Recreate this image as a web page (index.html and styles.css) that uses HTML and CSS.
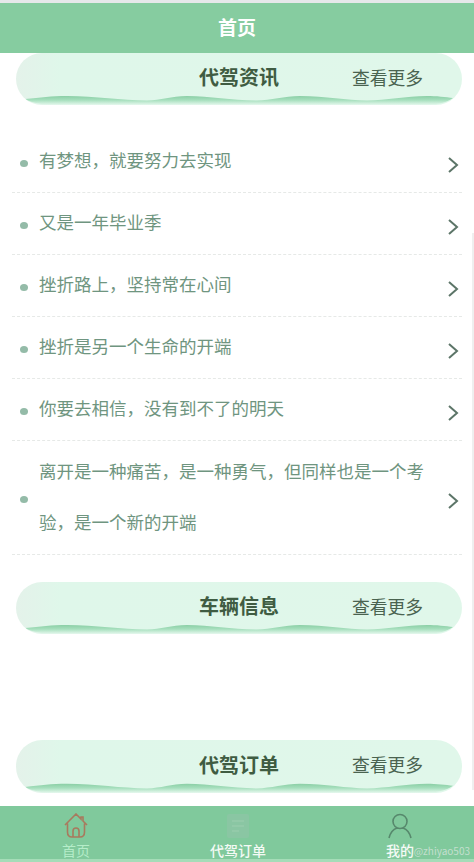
FILE: index.html
```html
<!DOCTYPE html>
<html lang="zh">
<head>
<meta charset="utf-8">
<title>首页</title>
<link rel="stylesheet" href="styles.css">
</head>
<body>
<svg class="defs" aria-hidden="true">
  <defs>
    <linearGradient id="waveFade" x1="0" y1="0" x2="0" y2="1">
      <stop offset="0" stop-color="#8bcfa6"/>
      <stop offset="0.45" stop-color="#a6dfbd"/>
      <stop offset="1" stop-color="#e6f8ee"/>
    </linearGradient>
    <symbol id="wave" viewBox="0 0 446 52" preserveAspectRatio="none">
      <path fill="url(#waveFade)" d="M9 46 C25 44.5 35 43 51 43 C80 43 105 47.5 131 47.5 C145 47.5 155 43 171 43 C195 43 215 47.5 241 47.5 C255 47.5 268 43 284 43 C310 43 330 47.5 351 47.5 C370 47.5 390 43 411 43 C420 43 430 44 437 45 C430 50 420 52 405 52 L40 52 C28 52 16 50 9 46 Z"/>
    </symbol>
  </defs>
</svg>
<div class="app">
  <header class="nav">首页</header>
  <main class="content">
    <span class="scroll-thumb"></span>
    <section class="card card-first">
      <span class="card-title">代驾资讯</span>
      <span class="card-more">查看更多</span>
      <svg class="wave"><use href="#wave"/></svg>
    </section>
    <ul class="news">
      <li class="news-item"><span class="dot"></span><span class="news-text">有梦想，就要努力去实现</span><svg class="chev" viewBox="0 0 12 18"><path d="M2 2 L10 9 L2 16"/></svg></li>
      <li class="news-item"><span class="dot"></span><span class="news-text">又是一年毕业季</span><svg class="chev" viewBox="0 0 12 18"><path d="M2 2 L10 9 L2 16"/></svg></li>
      <li class="news-item"><span class="dot"></span><span class="news-text">挫折路上，坚持常在心间</span><svg class="chev" viewBox="0 0 12 18"><path d="M2 2 L10 9 L2 16"/></svg></li>
      <li class="news-item"><span class="dot"></span><span class="news-text">挫折是另一个生命的开端</span><svg class="chev" viewBox="0 0 12 18"><path d="M2 2 L10 9 L2 16"/></svg></li>
      <li class="news-item"><span class="dot"></span><span class="news-text">你要去相信，没有到不了的明天</span><svg class="chev" viewBox="0 0 12 18"><path d="M2 2 L10 9 L2 16"/></svg></li>
      <li class="news-item news-item-long"><span class="dot"></span><span class="news-text">离开是一种痛苦，是一种勇气，但同样也是一个考验，是一个新的开端</span><svg class="chev" viewBox="0 0 12 18"><path d="M2 2 L10 9 L2 16"/></svg></li>
    </ul>
    <section class="card card-second">
      <span class="card-title">车辆信息</span>
      <span class="card-more">查看更多</span>
      <svg class="wave"><use href="#wave"/></svg>
    </section>
    <section class="card card-third">
      <span class="card-title">代驾订单</span>
      <span class="card-more">查看更多</span>
      <svg class="wave"><use href="#wave"/></svg>
    </section>
  </main>
  <footer class="tabbar">
    <div class="tab tab-active">
      <svg class="tab-icon" viewBox="0 0 24 26"><path class="icon-home" d="M1 12 L12 1 L17 6 V4 H19 V8 L23 12 M3.5 10.5 V19 Q3.5 24 8 24 H16 Q20.5 24 20.5 19 V10.5 M9 24 V18 Q9 15 12 15 Q15 15 15 18 V24"/></svg>
      <span>首页</span>
    </div>
    <div class="tab tab-strong">
      <svg class="tab-icon" viewBox="0 0 24 26"><rect class="icon-order-bg" x="1" y="1" width="22" height="24" rx="2"/><path class="icon-order" d="M6 8 H18 M6 13 H18 M6 18 H13"/></svg>
      <span>代驾订单</span>
    </div>
    <div class="tab tab-strong">
      <svg class="tab-icon" viewBox="0 0 24 26"><path class="icon-user" d="M12 1.5 A7 7 0 1 0 12 15.5 A7 7 0 1 0 12 1.5 Z M1 25 Q3 17 9 15 M23 25 Q21 17 15 15"/></svg>
      <span>我的</span>
    </div>
    <span class="mark">@zhiyao503</span>
  </footer>
</div>
</body>
</html>
```
FILE: styles.css
```css
* { box-sizing: border-box; }
html, body { margin: 0; padding: 0; height: 100%; background: #fff; overflow: hidden; }
body { font-family: "Noto Sans CJK SC", "Liberation Sans", sans-serif; }
.defs { position: absolute; width: 0; height: 0; }
.app { width: 474px; height: 862px; display: flex; flex-direction: column; border-top: 3px solid #e6e8ea; border-bottom: 3px solid #a5dcb8; }
.nav { flex: 0 0 50px; background: #86cca0; color: #fff; font-size: 19px; font-weight: 700; display: flex; align-items: center; justify-content: center; padding-bottom: 4px; }
.content { position: relative; flex: 1; display: flex; flex-direction: column; overflow: hidden; }
.scroll-thumb { position: absolute; right: 0; top: 180px; width: 2px; height: 557px; background: #efefef; }
.card { position: relative; flex: 0 0 52px; margin: 0 12px 0 16px; border-radius: 26px; background: linear-gradient(90deg, #e4f2ea 0%, #dff7ea 10%, #e0f7ea 100%); display: flex; align-items: center; overflow: hidden; }
.card-second { margin-top: 27px; }
.card-third { margin-top: 106px; flex-basis: 53px; }
.card-title { position: relative; z-index: 1; margin-left: 183px; width: 98px; font-size: 20px; font-weight: 700; color: #3f5c42; line-height: 1; margin-top: -4px; }
.card-more { position: relative; z-index: 1; margin-left: 55px; font-size: 17.8px; color: #4a6350; line-height: 1; margin-top: -3px; }
.wave { position: absolute; left: 0; top: 0; width: 100%; height: 100%; }
.news { list-style: none; margin: 26px 12px 0 12px; padding: 0; }
.news-item { display: flex; align-items: center; min-height: 62px; border-bottom: 1px dashed #e6e9e7; padding-left: 8px; }
.news-item-long { min-height: 114px; }
.dot { flex: 0 0 8px; width: 8px; height: 7px; border-radius: 50%; background: #94bba8; margin-right: 11px; margin-top: 4px; filter: blur(0.4px); }
.news-text { flex: 1; font-size: 17.5px; line-height: 51px; color: #6f9580; margin-top: -4px; }
.chev { flex: 0 0 12px; width: 12px; height: 18px; margin: 7px 3px 0 8px; }
.chev path { fill: none; stroke: #5c7568; stroke-width: 2; }
.tabbar { position: relative; flex: 0 0 53px; background: #80c99c; display: flex; justify-content: space-between; padding: 0 21px 0 23px; margin-top: 13px; }
.tab { width: 106px; display: flex; flex-direction: column; align-items: center; font-size: 14px; line-height: 1; }
.tab-icon { width: 24px; height: 26px; margin-top: 7px; margin-bottom: 4px; }
.tab-icon path { fill: none; stroke-width: 1.6; }
.tab-active { color: #b5ecc9; }
.tab-strong { color: #f4faf5; font-weight: 500; }
.icon-home { stroke: #a87a5e; }
.icon-order-bg { fill: #8ac6a3; }
.tab-icon .icon-order { stroke: #93caa9; stroke-width: 2; }
.icon-user { stroke: #56886c; }
.mark { position: absolute; right: 4px; bottom: 1px; font-size: 10px; line-height: 14px; color: #c3dfce; white-space: nowrap; }
```
